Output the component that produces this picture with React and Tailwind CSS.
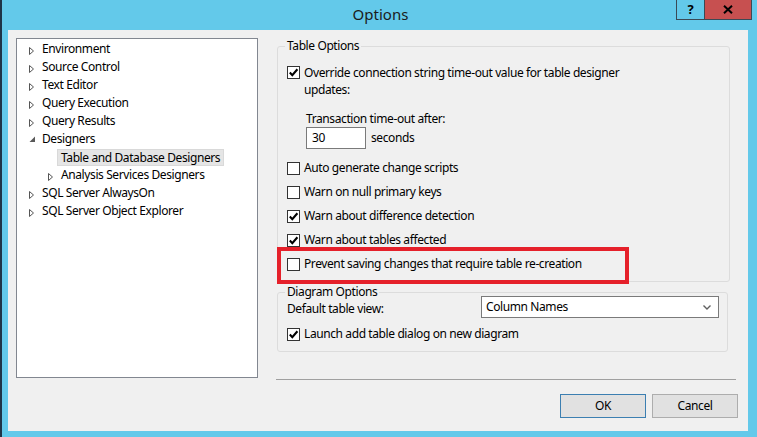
import React from "react"

const font = { fontFamily: "'Segoe UI', 'Noto Sans', sans-serif" }

const treeItems = [
  { label: "Environment", level: 0, arrow: "closed" },
  { label: "Source Control", level: 0, arrow: "closed" },
  { label: "Text Editor", level: 0, arrow: "closed" },
  { label: "Query Execution", level: 0, arrow: "closed" },
  { label: "Query Results", level: 0, arrow: "closed" },
  { label: "Designers", level: 0, arrow: "open" },
  { label: "Table and Database Designers", level: 1, arrow: null, selected: true },
  { label: "Analysis Services Designers", level: 1, arrow: "closed" },
  { label: "SQL Server AlwaysOn", level: 0, arrow: "closed" },
  { label: "SQL Server Object Explorer", level: 0, arrow: "closed" },
]

const Arrow = ({ type }) => {
  if (type === "closed") {
    return (
      <svg width="7" height="10" viewBox="0 0 7 10" className="mt-[3px]">
        <path d="M1.5 1.5 L5.5 5 L1.5 8.5 Z" fill="#fff" stroke="#555" strokeWidth="1" />
      </svg>
    )
  }
  if (type === "open") {
    return (
      <svg width="7" height="7" viewBox="0 0 7 7" className="mt-[1px] ml-[1px]">
        <path d="M6 0.5 L6 6 L0.5 6 Z" fill="#595959" />
      </svg>
    )
  }
  return null
}

const CheckBox = ({ checked }) => (
  <span className="w-[13px] h-[13px] border border-[#333333] bg-white flex items-center justify-center shrink-0">
    {checked && (
      <svg width="11" height="11" viewBox="0 0 11 11">
        <path d="M1.8 5.6 L4.3 8.2 L9.4 2.3" fill="none" stroke="#000" strokeWidth="2.1" />
      </svg>
    )}
  </span>
)

const CheckRow = ({ checked, label }) => (
  <div className="flex items-center gap-[4px] h-[16px]">
    <CheckBox checked={checked} />
    <span className="leading-[16px]">{label}</span>
  </div>
)

const Tree = () => (
  <div className="w-[242px] h-[340px] bg-white border border-[#828790] pt-[1px] shrink-0">
    {treeItems.map((item) => (
      <div
        key={item.label}
        className={`h-[18px] flex items-center ${item.level === 0 ? "pl-[11px]" : "pl-[30px]"}`}
      >
        <span className="w-[14px] flex shrink-0">
          <Arrow type={item.arrow} />
        </span>
        {item.selected ? (
          <span className="-ml-[4px] px-[3px] border border-[#d9d9d9] bg-[#e5e5e5] leading-[15px]">
            {item.label}
          </span>
        ) : (
          <span className="leading-[18px]">{item.label}</span>
        )}
      </div>
    ))}
  </div>
)

const TableOptions = () => (
  <fieldset className="w-[453px] ml-[1px] border border-[#dcdcdc] rounded-[3px] px-0 pb-[9px]">
    <legend className="ml-[7px] px-[2px] leading-[16px]">Table Options</legend>
    <div className="pl-[9px]">
      <div className="flex items-start gap-[4px] mt-[10px]">
        <span className="mt-[2px]">
          <CheckBox checked />
        </span>
        <span className="leading-[17px]">
          Override connection string time-out value for table designer
          <br />
          updates:
        </span>
      </div>
      <div className="pl-[19px] mt-[13px] leading-[16px]">Transaction time-out after:</div>
      <div className="pl-[19px] flex items-center gap-[5px]">
        <div className="w-[60px] h-[22px] border border-[#7a7a7a] bg-white flex items-center pl-[5px]">
          30
        </div>
        <span>seconds</span>
      </div>
      <div className="flex flex-col gap-[8px] mt-[11px]">
        <CheckRow label="Auto generate change scripts" />
        <CheckRow label="Warn on null primary keys" />
        <CheckRow checked label="Warn about difference detection" />
        <CheckRow checked label="Warn about tables affected" />
        <CheckRow label="Prevent saving changes that require table re-creation" />
      </div>
    </div>
  </fieldset>
)

const DiagramOptions = () => (
  <fieldset className="w-[451px] ml-[1px] mt-[4px] border border-[#dcdcdc] rounded-[3px] px-0 pb-[9px]">
    <legend className="ml-[7px] px-[2px] leading-[12px]">Diagram Options</legend>
    <div className="pl-[9px] pr-[8px]">
      <div className="flex items-center justify-between -mt-[2px]">
        <span className="mt-[4px] leading-[14px]">Default table view:</span>
        <div className="w-[238px] h-[22px] border border-[#7a7a7a] bg-white flex items-center justify-between pl-[4px] pr-[7px]">
          <span>Column Names</span>
          <svg width="8" height="5" viewBox="0 0 8 5">
            <path d="M0.5 0.5 L4 4 L7.5 0.5" fill="none" stroke="#606060" strokeWidth="1.4" />
          </svg>
        </div>
      </div>
      <div className="mt-[8px]">
        <CheckRow checked label="Launch add table dialog on new diagram" />
      </div>
    </div>
  </fieldset>
)

export default function App() {
  return (
    <div
      className="w-[757px] h-[437px] flex bg-[#63c9ea] text-[12px] tracking-[-0.4px] text-black overflow-hidden"
      style={font}
    >
      <div className="w-[2px] bg-[#1f3447] shrink-0" />
      <div className="flex-1 flex flex-col">
        {/* Title bar */}
        <div className="relative h-[30px] flex items-center justify-center shrink-0">
          <span className="text-[15px] tracking-normal text-[#1b1b1b] ml-[2px] -mt-[1px]">Options</span>
          <div className="absolute top-0 right-[5px] flex h-[20px] border-x border-b border-[#3a4a56]">
            <div className="w-[28px] flex items-center justify-center text-[13px] font-bold border-r border-[#3a4a56]">
              ?
            </div>
            <div className="w-[46px] bg-[#c75050] flex items-center justify-center">
              <svg width="10" height="9" viewBox="0 0 10 9">
                <path d="M1 0.8 L9 8.2 M9 0.8 L1 8.2" stroke="#000" strokeWidth="2" />
              </svg>
            </div>
          </div>
        </div>

        {/* Client area */}
        <div className="ml-[6px] mr-[9px] h-[401px] bg-[#f0f0f0] flex pl-[8px] pt-[8px] pr-[10px]">
          <Tree />
          <div className="relative ml-[18px] flex-1 flex flex-col">
            <TableOptions />
            <DiagramOptions />
            <div className="mt-[27px] w-[460px] h-px bg-[#a0a0a0]" />
            <div className="flex justify-end gap-[6px] mt-[14px]">
              <button className="w-[86px] h-[24px] bg-[#e1e1e1] border border-[#3c7fb1]">OK</button>
              <button className="w-[86px] h-[24px] bg-[#e1e1e1] border border-[#adadad]">Cancel</button>
            </div>
            {/* highlight annotation */}
            <div className="absolute left-[1px] top-[209px] w-[352px] h-[37px] border-[4px] border-[#e5202a] pointer-events-none" />
          </div>
        </div>
      </div>
    </div>
  )
}
